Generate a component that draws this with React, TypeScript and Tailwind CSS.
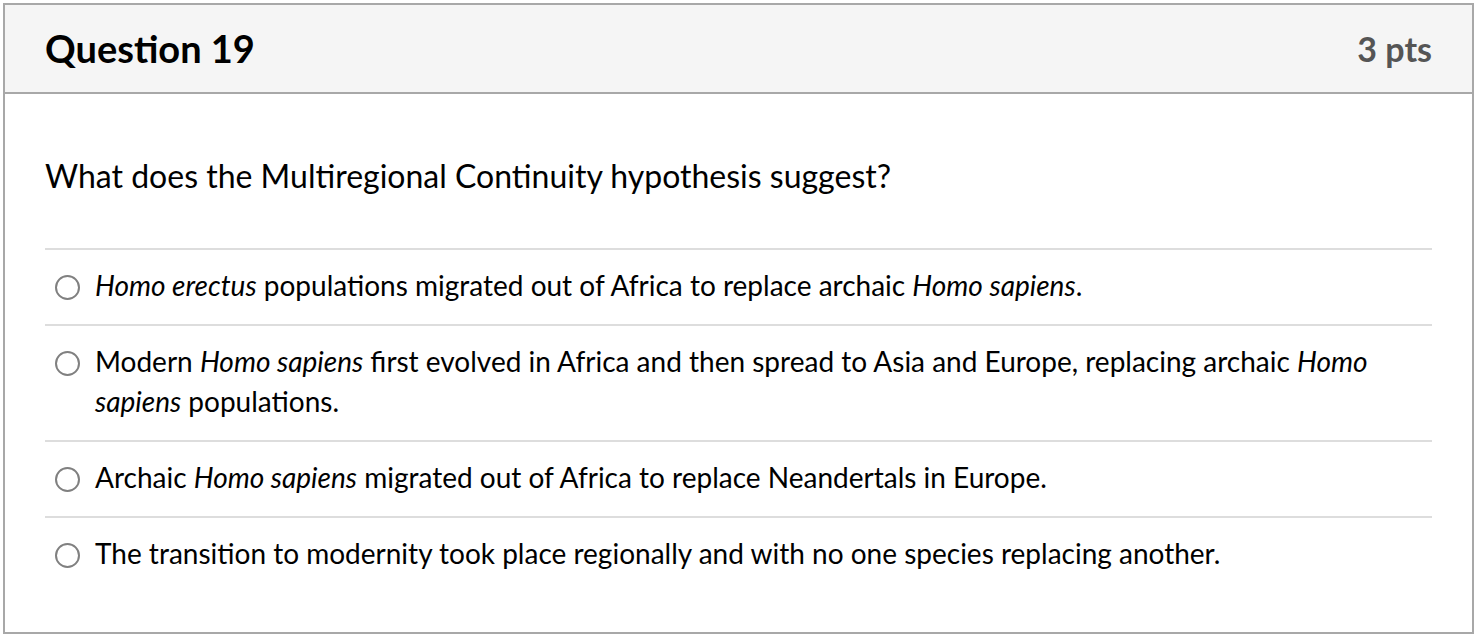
import React from "react";

const Radio = () => (
  <span className="mt-[10px] inline-block h-[25px] w-[25px] shrink-0 rounded-full border-2 border-[#808080] bg-white" />
);

const options: React.ReactNode[] = [
  <>
    <em>Homo erectus</em> populations migrated out of Africa to replace archaic <em>Homo sapiens</em>.
  </>,
  <>
    Modern <em>Homo sapiens</em> first evolved in Africa and then spread to Asia and Europe, replacing archaic <em>Homo sapiens</em> populations.
  </>,
  <>
    Archaic <em>Homo sapiens</em> migrated out of Africa to replace Neandertals in Europe.
  </>,
  <>The transition to modernity took place regionally and with no one species replacing another.</>,
];

export default function App() {
  return (
    <div
      className="min-h-[642px] bg-white pb-[3px] pl-[3px] pr-[2px] pt-[3px]"
      style={{ fontFamily: "Lato, 'Liberation Sans', sans-serif" }}
    >
      <div className="border-2 border-[#a8a8a8] bg-white text-black">
        <div className="flex h-[89px] items-center justify-between border-b-2 border-[#a8a8a8] bg-[#f5f5f5] pl-[40px] pr-[40px]">
          <h2 className="text-[38px] font-bold">Question 19</h2>
          <span className="text-[34px] font-bold text-[#555]">3 pts</span>
        </div>
        <div className="px-[40px] pb-[40px] pt-[62px]">
          <p className="text-[32px] leading-[40px]">What does the Multiregional Continuity hypothesis suggest?</p>
          <div className="mt-[52px] border-t-2 border-[#ddd]">
            {options.map((o, i) => (
              <div
                key={i}
                className={`flex gap-[15px] pb-[19px] pl-[10px] pt-[15px] ${i < options.length - 1 ? "border-b-2 border-[#ddd]" : ""}`}
              >
                <Radio />
                <div className="text-[28px] leading-[40px]">{o}</div>
              </div>
            ))}
          </div>
        </div>
      </div>
    </div>
  );
}
